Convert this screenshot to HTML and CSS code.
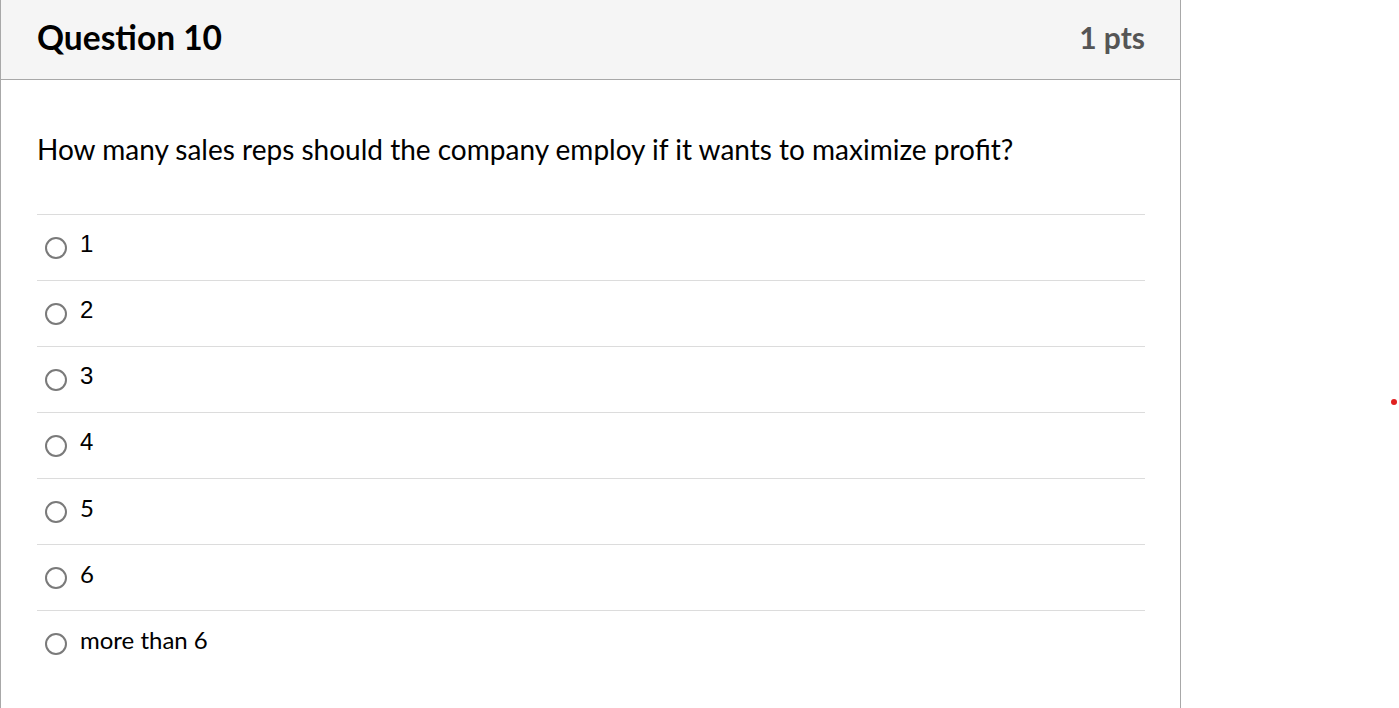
FILE: index.html
```html
<!DOCTYPE html>
<html lang="en">
<head>
<meta charset="utf-8">
<title>Question 10</title>
<link rel="stylesheet" href="styles.css">
</head>
<body>
<div class="page">
  <div class="card">
    <div class="card-header">
      <h2 class="title">Question 10</h2>
      <span class="pts">1 pts</span>
    </div>
    <div class="card-body">
      <p class="question">How many sales reps should the company employ if it wants to maximize profit?</p>
      <div class="answers">
        <label class="answer"><span class="radio"></span><span class="label arial">1</span></label>
        <label class="answer"><span class="radio"></span><span class="label arial">2</span></label>
        <label class="answer"><span class="radio"></span><span class="label arial">3</span></label>
        <label class="answer"><span class="radio"></span><span class="label arial">4</span></label>
        <label class="answer"><span class="radio"></span><span class="label">5</span></label>
        <label class="answer"><span class="radio"></span><span class="label">6</span></label>
        <label class="answer"><span class="radio"></span><span class="label">more than 6</span></label>
      </div>
    </div>
  </div>
  <span class="dot"></span>
</div>
</body>
</html>
```
FILE: styles.css
```css
html, body {
  margin: 0;
  padding: 0;
  background: #fff;
}
body {
  font-family: Lato, "Open Sans", sans-serif;
  color: #000;
  overflow: hidden;
}
.page {
  position: relative;
  height: 708px;
}
.card {
  width: 1179px;
  height: 720px;
  border-left: 1px solid #a8a8a8;
  border-right: 1px solid #a8a8a8;
  box-sizing: content-box;
}
.card-header {
  height: 79px;
  background: #f5f5f5;
  border-bottom: 1px solid #a8a8a8;
  display: flex;
  align-items: center;
  justify-content: space-between;
  padding: 0 35px 0 36px;
}
.title {
  margin: 0;
  font-size: 33.5px;
  font-weight: 700;
  color: #000;
  padding-bottom: 6px;
}
.pts {
  font-size: 30px;
  font-weight: 700;
  color: #555;
  padding-bottom: 6px;
}
.card-body {
  padding: 51px 35px 0 36px;
}
.question {
  margin: 0 0 47px 0;
  font-size: 28px;
  line-height: 36px;
}
.answers {
  display: flex;
  flex-direction: column;
}
.answer {
  display: flex;
  align-items: center;
  gap: 13px;
  height: 65px;
  border-top: 1px solid #dcdcdc;
  padding-left: 8px;
  font-size: 24px;
}
.radio {
  width: 18px;
  height: 18px;
  border: 2px solid #7a7a7a;
  border-radius: 50%;
  background: #fff;
  flex: none;
}
.label {
  line-height: 1;
  padding-bottom: 7px;
}
.label.arial {
  font-family: "Liberation Sans", Arial, sans-serif;
  font-size: 24px;
}
.dot {
  position: absolute;
  left: 1391px;
  top: 399px;
  width: 6px;
  height: 6px;
  border-radius: 50%;
  background: #e02020;
}
```
